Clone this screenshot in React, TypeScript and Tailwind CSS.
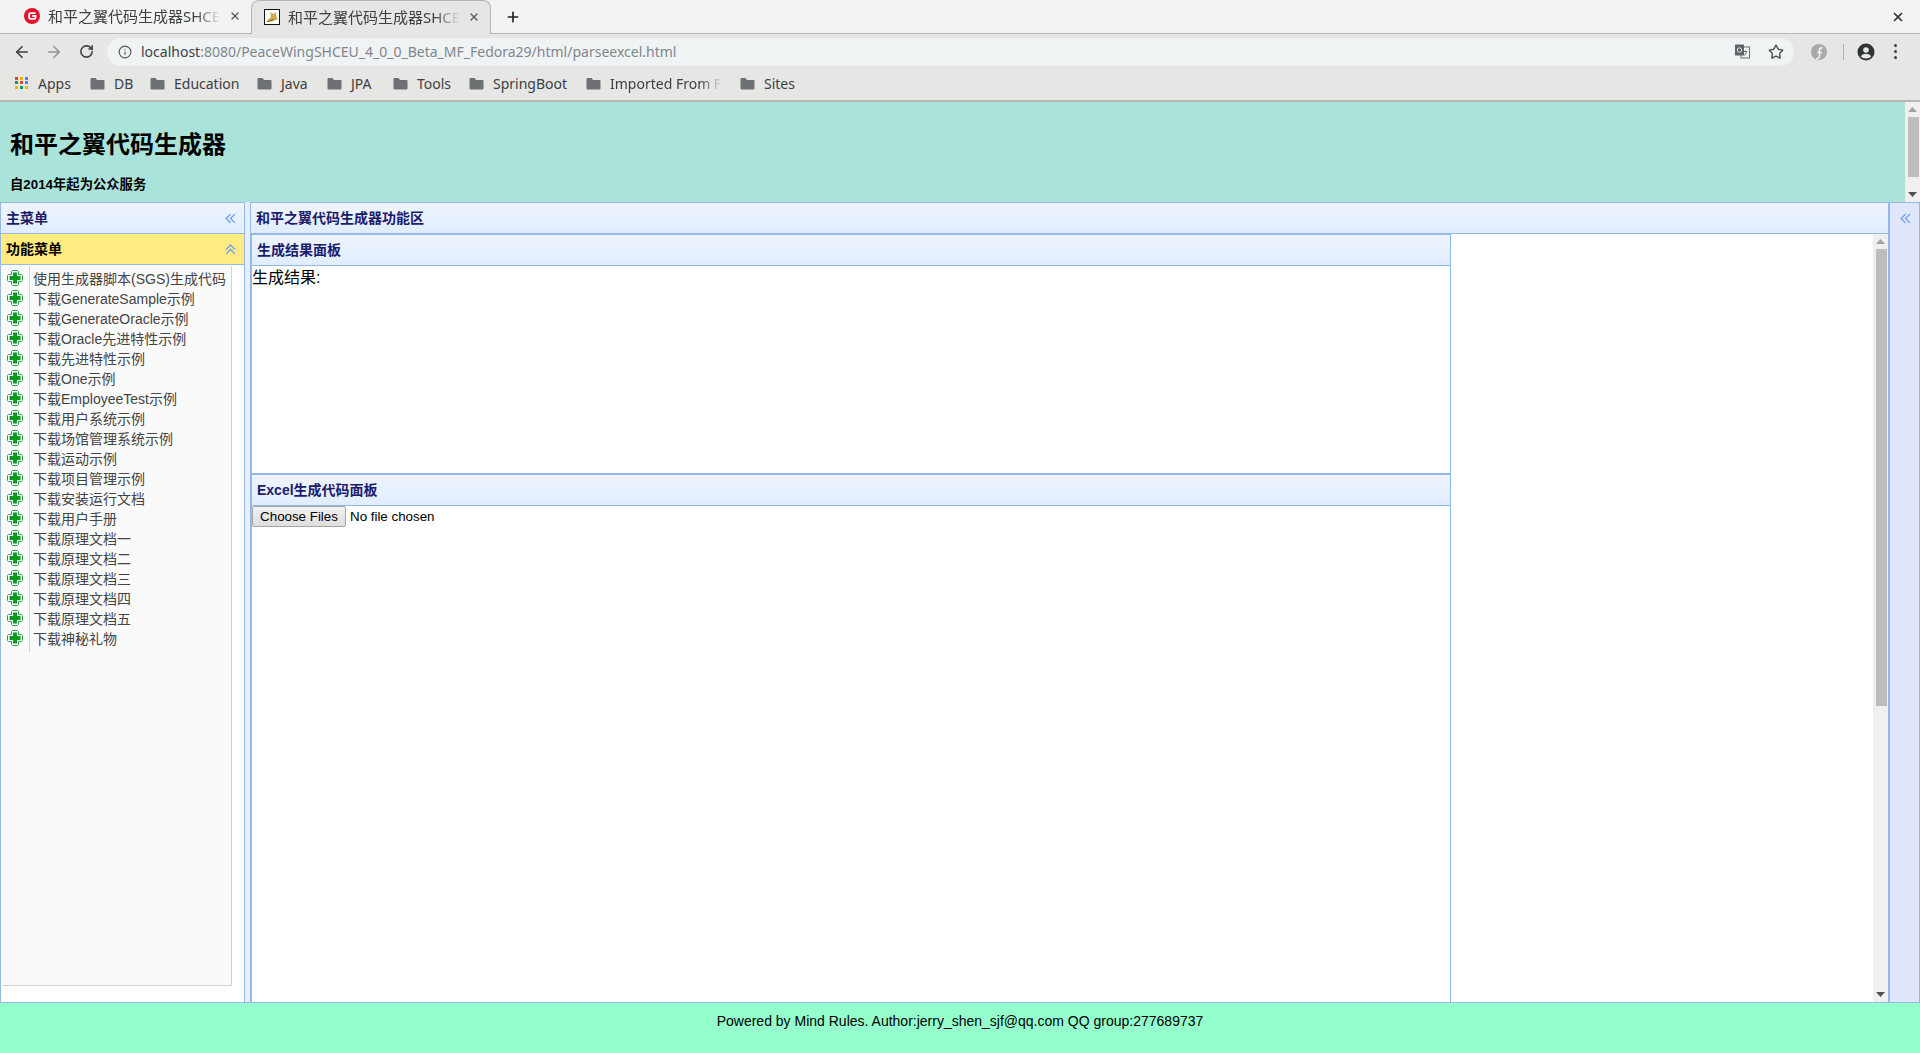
import { ArrowLeft, ArrowRight, Info, Plus, RotateCw, Star, X } from "lucide-react";

const cjk = "font-['Liberation_Sans','Noto_Sans_CJK_SC',sans-serif]";
const ui = "font-['Noto_Sans','Noto_Sans_CJK_SC',sans-serif]";

const bookmarks = [
  { label: "DB", w: "w-[60px]" },
  { label: "Education", w: "w-[107px]" },
  { label: "Java", w: "w-[70px]" },
  { label: "JPA", w: "w-[66px]" },
  { label: "Tools", w: "w-[76px]" },
  { label: "SpringBoot", w: "w-[117px]" },
];

const menuItems = [
  "使用生成器脚本(SGS)生成代码",
  "下载GenerateSample示例",
  "下载GenerateOracle示例",
  "下载Oracle先进特性示例",
  "下载先进特性示例",
  "下载One示例",
  "下载EmployeeTest示例",
  "下载用户系统示例",
  "下载场馆管理系统示例",
  "下载运动示例",
  "下载项目管理示例",
  "下载安装运行文档",
  "下载用户手册",
  "下载原理文档一",
  "下载原理文档二",
  "下载原理文档三",
  "下载原理文档四",
  "下载原理文档五",
  "下载神秘礼物",
];

function FolderIcon() {
  return (
    <svg width="15" height="13" viewBox="0 0 15 13" className="shrink-0">
      <path d="M1.5 1h4l1.5 2h6.5a1 1 0 0 1 1 1v7.5a1 1 0 0 1-1 1h-12a1 1 0 0 1-1-1v-9.500a1 1 0 0 1 1-1z" fill="#6e7173" />
    </svg>
  );
}

function AppsIcon() {
  const colors = ["#db4437", "#f4b400", "#4285f4", "#0f9d58", "#db4437", "#4285f4", "#f4b400", "#0f9d58", "#f4b400"];
  return (
    <div className="grid grid-cols-3 gap-[1.500px] w-[13px] h-[13px] shrink-0">
      {colors.map((c, i) => (
        <svg key={i} width="3" height="3" viewBox="0 0 3 3">
          <rect width="3" height="3" fill={c} />
        </svg>
      ))}
    </div>
  );
}

function GearLogo() {
  return (
    <svg width="16" height="16" viewBox="0 0 16 16" className="shrink-0">
      <circle cx="8" cy="8" r="8" fill="#e8112d" />
      <path d="M11.500 5.200H6.200a1 1 0 0 0-1 1v3.600a1 1 0 0 0 1 1h4.300a1 1 0 0 0 1-1V8H8.200" fill="none" stroke="#fff" strokeWidth="1.800" />
    </svg>
  );
}

function TomcatIcon() {
  return (
    <svg width="16" height="16" viewBox="0 0 16 16" className="shrink-0">
      <rect x="0.500" y="0.500" width="15" height="15" fill="#fbfaf4" stroke="#111" />
      <path d="M2.500 12.500c2-1 2.500-3.500 4.500-4.500L6.500 3l2 1.500h2L12 3v4c1 1 1.500 2.500 1 4-2-.5-3 .5-5 1.500z" fill="#d2a94e" />
      <path d="M3 12.500c2-.5 4-.5 7-2" stroke="#6b5a2a" fill="none" />
    </svg>
  );
}

function TranslateIcon() {
  return (
    <svg width="15" height="15" viewBox="0 0 15 15" className="shrink-0">
      <rect x="6" y="3" width="8.500" height="11" fill="#f0f3f4" stroke="#6e7173" />
      <path d="M0 0.500h9v11H0z" fill="#5f6368" />
      <circle cx="4.500" cy="6" r="2.200" fill="none" stroke="#e6e6e4" strokeWidth="1" />
      <path d="M8.500 7.500h4M10.500 6.500v1M9.500 11.500l2-3.500" fill="none" stroke="#6e7173" strokeWidth="1" />
    </svg>
  );
}

function FedoraIcon() {
  return (
    <svg width="16" height="16" viewBox="0 0 16 16" className="shrink-0">
      <circle cx="8" cy="8" r="8" fill="#a9a9a9" />
      <path d="M5 14.500c2 .5 3.500-.5 3.500-2.500V6c0-1.500 1-2.500 3-2M6 8.500h5" fill="none" stroke="#f2f2f2" strokeWidth="1.600" />
    </svg>
  );
}

function AccountIcon() {
  return (
    <svg width="18" height="18" viewBox="0 0 18 18" className="shrink-0">
      <circle cx="9" cy="9" r="8.500" fill="#2f3437" />
      <circle cx="9" cy="7" r="2.800" fill="#e6e6e4" />
      <path d="M3.800 13.300c1-1.900 3.200-2.600 5.200-2.600s4.200.7 5.200 2.600c-1.200 1.400-3.100 2.200-5.200 2.200s-4-.8-5.200-2.200z" fill="#e6e6e4" />
    </svg>
  );
}

function CrossIcon() {
  return (
    <svg width="16" height="16" viewBox="0 0 16 16" className="shrink-0">
      <path d="M5.500.500h5l1 1v3h3l1 1v5l-1 1h-3v3l-1 1h-5l-1-1v-3h-3l-1-1v-5l1-1h3v-3z" fill="#fff" stroke="#2f9e52" />
      <path d="M6 2.500h4v3.500h3.500v4H10v3.500H6V10H2.500V6H6z" fill="#069a1e" />
    </svg>
  );
}

function DoubleChevron({ up }: { up?: boolean }) {
  return (
    <svg width="11" height="11" viewBox="0 0 10 10" className="shrink-0">
      <path
        d={up ? "M1 5l4-4 4 4M1 9l4-4 4 4" : "M5 1L1 5l4 4M9 1L5 5l4 4"}
        fill="none"
        stroke="#6d9cf0"
        strokeWidth="1.200"
      />
    </svg>
  );
}

function ScrollBar({ thumb }: { thumb: string }) {
  return (
    <div className="w-[15px] shrink-0 h-full bg-[#f0f0f0] flex flex-col items-center">
      <div className="h-[15px] w-full flex items-center justify-center shrink-0">
        <svg width="9" height="5" viewBox="0 0 9 5">
          <path d="M4.500 0L9 5H0z" fill="#a3a3a3" />
        </svg>
      </div>
      <div className={`w-[11px] ml-[1px] bg-[#bdbdbd] shrink-0 ${thumb}`} />
      <div className="grow" />
      <div className="h-[15px] w-full flex items-center justify-center shrink-0">
        <svg width="9" height="5" viewBox="0 0 9 5">
          <path d="M4.500 5L9 0H0z" fill="#505050" />
        </svg>
      </div>
    </div>
  );
}

function PanelHeader({ title }: { title: string }) {
  return (
    <div className="h-[31px] shrink-0 pl-[5px] flex items-center border-b border-[#95b8e7] bg-gradient-to-b from-[#eff5ff] to-[#e0ecff] text-[14px] font-bold text-[#1c1c6b]">
      {title}
    </div>
  );
}

function BrowserChrome() {
  return (
    <div className={`${ui} shrink-0`}>
      <div className="h-[34px] bg-[#f3f3f3] border-b-[1px] border-[#b6b6b3] flex items-end text-[15px] text-[#3c4043]">
        <div className="w-[251px] h-[33px] flex items-center pl-[24px] pr-[10px] gap-[8px] pb-[1px]">
          <GearLogo />
          <span className="w-[174px] overflow-hidden whitespace-nowrap [mask-image:linear-gradient(to_right,black_85%,transparent)]">
            和平之翼代码生成器SHCEU
          </span>
          <X size={12} strokeWidth={2.500} className="text-[#55585b] shrink-0" />
        </div>
        <div className="w-[240px] h-[34px] -mb-[1px] bg-[#e6e6e4] rounded-t-[8px] border border-b-0 border-[#b6b6b3] flex items-center pl-[12px] pr-[10px] gap-[8px] pb-[1px]">
          <TomcatIcon />
          <span className="w-[174px] overflow-hidden whitespace-nowrap [mask-image:linear-gradient(to_right,black_85%,transparent)]">
            和平之翼代码生成器SHCEU
          </span>
          <X size={12} strokeWidth={2.500} className="text-[#55585b] shrink-0" />
        </div>
        <div className="h-[33px] flex items-center ml-[14px] grow">
          <Plus size={16} strokeWidth={2.500} className="text-[#202124]" />
        </div>
        <div className="h-[33px] flex items-center pr-[15px]">
          <X size={14} strokeWidth={3} className="text-[#2f3437]" />
        </div>
      </div>
      <div className="h-[35px] bg-[#e6e6e4] flex items-center text-[#5f6368]">
        <ArrowLeft size={18} strokeWidth={2.200} className="ml-[13px] text-[#3b3f42] shrink-0" />
        <ArrowRight size={18} strokeWidth={2.200} className="ml-[14px] text-[#8f9294] shrink-0" />
        <RotateCw size={15} strokeWidth={2.500} className="ml-[16px] text-[#3b3f42] shrink-0" />
        <div className="ml-[13px] w-[1687px] h-[28px] rounded-full bg-[#f0f3f4] flex items-center pl-[11px] pr-[10px] text-[14px]">
          <Info size={14} className="text-[#55585b] shrink-0" />
          <span className="ml-[9px] whitespace-nowrap text-[#80868b]">
            <span className="text-[#3c4043]">localhost</span>:8080/PeaceWingSHCEU_4_0_0_Beta_MF_Fedora29/html/parseexcel.html
          </span>
          <span className="ml-auto">
            <TranslateIcon />
          </span>
          <Star size={16} strokeWidth={2.200} className="ml-[18px] text-[#55585b] shrink-0" />
        </div>
        <div className="ml-[17px]">
          <FedoraIcon />
        </div>
        <div className="ml-[16px] w-px h-[16px] bg-[#b3b3b1]" />
        <div className="ml-[13px]">
          <AccountIcon />
        </div>
        <div className="ml-[19px] flex flex-col gap-[3px]">
          <div className="w-[3px] h-[3px] rounded-full bg-[#3b3f42]" />
          <div className="w-[3px] h-[3px] rounded-full bg-[#3b3f42]" />
          <div className="w-[3px] h-[3px] rounded-full bg-[#3b3f42]" />
        </div>
      </div>
      <div className="h-[33px] pb-[3px] bg-[#e6e6e4] border-b-[2px] border-[#b6b6b3] flex items-center text-[14px] text-[#3c4043]">
        <div className="w-[90px] flex items-center pl-[15px] gap-[10px]">
          <AppsIcon />
          <span>Apps</span>
        </div>
        {bookmarks.map((b) => (
          <div key={b.label} className={`${b.w} flex items-center gap-[9px]`}>
            <FolderIcon />
            <span>{b.label}</span>
          </div>
        ))}
        <div className="w-[154px] flex items-center gap-[9px]">
          <FolderIcon />
          <span className="w-[112px] overflow-hidden whitespace-nowrap [mask-image:linear-gradient(to_right,black_80%,transparent)]">
            Imported From Fedora
          </span>
        </div>
        <div className="flex items-center gap-[9px]">
          <FolderIcon />
          <span>Sites</span>
        </div>
      </div>
    </div>
  );
}

export default function App() {
  return (
    <div className={`h-[1053px] w-[1920px] overflow-hidden flex flex-col bg-[#e6eeff] ${cjk}`}>
      <BrowserChrome />

      <div className="h-[100px] shrink-0 bg-[#a9e3d9] flex">
        <div className="grow pl-[10px] text-black">
          <h1 className="text-[24px] font-bold leading-[32px] mt-[27px]">和平之翼代码生成器</h1>
          <p className="text-[13.333px] font-bold leading-[18px] mt-[15px]">自2014年起为公众服务</p>
        </div>
        <ScrollBar thumb="h-[60px]" />
      </div>

      <div className="h-[801px] shrink-0 flex border-b border-[#95b8e7] bg-[#e6eeff]">
        <aside className="w-[245px] shrink-0 bg-white border-x border-t border-[#95b8e7] flex flex-col">
          <div className="h-[31px] shrink-0 px-[5px] flex items-center justify-between border-b border-[#95b8e7] bg-gradient-to-b from-[#eff5ff] to-[#e0ecff] text-[14px] font-bold text-[#1c1c6b]">
            主菜单
            <span className="mr-[3px]">
              <DoubleChevron />
            </span>
          </div>
          <div className="h-[31px] shrink-0 px-[5px] flex items-center justify-between border-b border-[#95b8e7] bg-[#ffeb7f] text-[14px] font-bold text-black">
            功能菜单
            <span className="mr-[3px]">
              <DoubleChevron up />
            </span>
          </div>
          <div className="h-[720px] w-[230px] ml-px mt-px bg-[#fafafa] border-r border-b border-[#d2d2d2] flex items-start">
            <div className="w-[28px] shrink-0 border-r border-[#d2d2d2] flex flex-col items-center pt-[4px] pr-[2px] pb-[2px]">
              {menuItems.map((m) => (
                <div key={m} className="h-[20px] flex items-start">
                  <CrossIcon />
                </div>
              ))}
            </div>
            <ul className="pl-[3px] pt-[3px] text-[14px] text-[#444] whitespace-nowrap">
              {menuItems.map((m) => (
                <li key={m} className="h-[20px] leading-[20px]">
                  {m}
                </li>
              ))}
            </ul>
          </div>
        </aside>

        <div className="w-[5px] shrink-0" />

        <main className="w-[1639px] shrink-0 bg-white border-x border-t border-[#95b8e7] flex flex-col">
          <div className="h-[31px] shrink-0 pl-[5px] flex items-center border-b border-[#95b8e7] bg-gradient-to-b from-[#eff5ff] to-[#e0ecff] text-[14px] font-bold text-[#1c1c6b]">
            和平之翼代码生成器功能区
          </div>
          <div className="grow min-h-0 flex">
            <div className="w-[1200px] shrink-0 flex flex-col border-x border-t border-[#95b8e7]">
              <PanelHeader title="生成结果面板" />
              <div className="h-[209px] shrink-0 border-b-2 border-[#95b8e7] text-[16px] leading-[20px] text-black pt-[2px]">
                生成结果:
              </div>
              <PanelHeader title="Excel生成代码面板" />
              <div className="grow">
                <div className="flex items-center text-[13.333px] text-black">
                  <button className="h-[21px] w-[94px] rounded-[2px] bg-gradient-to-b from-[#f2f2f2] to-[#dedede] border border-[#a6a6a6] text-[13.333px] leading-none">
                    Choose Files
                  </button>
                  <span className="ml-[4px]">No file chosen</span>
                </div>
              </div>
            </div>
            <div className="grow" />
            <ScrollBar thumb="h-[457px]" />
          </div>
        </main>

        <div className="grow border-x border-t border-[#95b8e7] bg-[#e0e7fd] flex justify-center pt-[10px] pl-[2px]">
          <DoubleChevron />
        </div>
      </div>

      <footer className="grow bg-[#94ffcc] text-center text-[14px] leading-[18px] pt-[9px] text-black">
        Powered by Mind Rules. Author:jerry_shen_sjf@qq.com QQ group:277689737
      </footer>
    </div>
  );
}
